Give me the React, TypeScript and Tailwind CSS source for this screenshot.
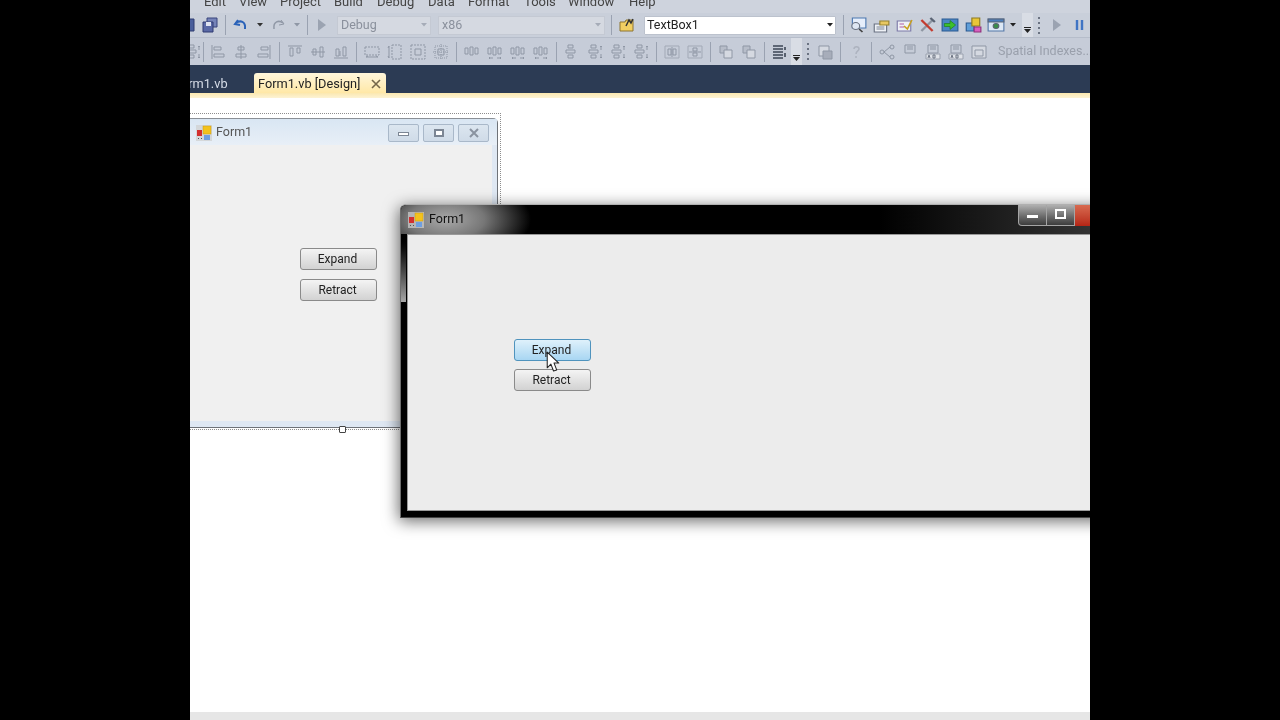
import React from "react";

const F = "font-['Roboto','Liberation_Sans',sans-serif]";

function Ico({ children, w = 16, d = false }: { children: React.ReactNode; w?: number; d?: boolean }) {
  return (
    <svg width={w} height={16} viewBox="0 0 16 16" fill="none" stroke={d ? "#8f97a5" : "#5b6474"} strokeWidth="1" className="shrink-0" preserveAspectRatio="none">
      {children}
    </svg>
  );
}
const Sep = () => <div className="w-px h-[20px] ml-[7px] mr-[7px] bg-[#9aa2b1] shrink-0" />;
const Caret = ({ c = "#333" }: { c?: string }) => (
  <svg width="6" height="4" viewBox="0 0 6 4" className="shrink-0"><path d="M0 0H6L3 3.5Z" fill={c} /></svg>
);
const Grip = () => (
  <div className="flex flex-col gap-[3px] shrink-0 ml-[5px]">
    <div className="w-[2px] h-[2px] bg-[#6b7382]" /><div className="w-[2px] h-[2px] bg-[#6b7382]" />
    <div className="w-[2px] h-[2px] bg-[#6b7382]" /><div className="w-[2px] h-[2px] bg-[#6b7382]" />
  </div>
);
const Overflow = ({ cls }: { cls: string }) => (
  <div className={`w-[11px] self-stretch bg-[#d9dde5] flex flex-col items-center justify-end pb-[4px] gap-[1px] shrink-0 ${cls}`}>
    <div className="w-[7px] h-px bg-[#222]" />
    <svg width="7" height="4" viewBox="0 0 7 4"><path d="M0 0H7L3.5 4Z" fill="#222" /></svg>
  </div>
);

const AlignL = () => <Ico d><path d="M2 1V15M4 3H11V6H4ZM4 10H14V13H4Z" /></Ico>;
const AlignC = () => <Ico d><path d="M8 1V15M5 3H11V6H5ZM3 10H13V13H3Z" /></Ico>;
const AlignR = () => <Ico d><path d="M14 1V15M5 3H12V6H5ZM2 10H12V13H2Z" /></Ico>;
const AlignT = () => <Ico d><path d="M1 2H15M3 4V12H6V4ZM10 4V9H13V4Z" /></Ico>;
const AlignM = () => <Ico d><path d="M1 8H15M3 5V11H6V5ZM10 3V13H13V3Z" /></Ico>;
const AlignB = () => <Ico d><path d="M1 14H15M3 5V12H6V5ZM10 3V12H13V3ZM7 7V12" /></Ico>;
const SizeW = () => <Ico d><path strokeDasharray="2 1" d="M1 3H15V11H1Z" /><path d="M2 13H14M2 13L4 12M14 13L12 12" /></Ico>;
const SizeH = () => <Ico d><path strokeDasharray="2 1" d="M5 1H14V15H5Z" /><path d="M2 2V14M2 2L1 4M2 14L1 12" /></Ico>;
const SizeB = () => <Ico d><path strokeDasharray="2 1" d="M1 1H15V15H1Z" /><path d="M5 5H11V11H5Z" /></Ico>;
const Grid = () => <Ico d><path strokeDasharray="1 1" d="M2 2H14V14H2ZM8 0V16M0 8H16" /><path d="M5 5H11V11H5Z" /></Ico>;
const HS = ({ a = true }: { a?: boolean }) => (
  <Ico d><path d="M1 4H4V10H1ZM6 3H9V11H6ZM11 4H14V10H11Z" />{a && <path d="M2 14H6M2 14L3 13M2 14L3 15M10 14H14M14 14L13 13M14 14L13 15" />}</Ico>
);
const VS = ({ a = true }: { a?: boolean }) => (
  <Ico d><path d="M4 1H9V4H4ZM2 6H11V9H2ZM4 11H9V14H4Z" />{a && <path d="M14 2V6M14 2L13 3M14 2L15 3M14 10V14M14 14L13 13M14 14L15 13" />}</Ico>
);
const Center = ({ flip = false }: { flip?: boolean }) => (
  <Ico d><path d="M1 2H15V14H1Z" stroke="#a2a9b6" />{flip ? <path d="M2 8H14M6 4H10V7H6ZM6 9H10V12H6Z" /> : <path d="M8 3V13M4 5H7V11H4ZM9 5H12V11H9Z" />}</Ico>
);
const Layer = () => <Ico d><path d="M2 2H9V9H2Z" fill="#b7bdc9" /><path d="M6 6H14V14H6Z" fill="#d5d9e1" /></Ico>;
const Lines = () => (
  <Ico><path d="M1 2H11M1 5H11M1 8H11M1 11H11M1 14H11" stroke="#3d4656" strokeWidth="1.4" /><path d="M13 3V6M13 9V13" stroke="#3d4656" strokeWidth="1.6" /></Ico>
);
const Doc = ({ t = false }: { t?: boolean }) => (
  <Ico d><path d="M3 1H13V9H3Z" /><path d="M5 3H11M5 5H11" />{t && <path d="M1 10H15V15H1Z" fill="#dfe2e8" stroke="#9aa1ae" />}{t && <path d="M3 14L4 11L5 14M8 11V14M8 11H10V14H8" stroke="#6d7483" />}</Ico>
);
const Play = ({ c = "#9ba3b1" }: { c?: string }) => (
  <svg width="16" height="16" viewBox="0 0 16 16" className="shrink-0"><path d="M4 2L12 8L4 14Z" fill={c} /></svg>
);

function FormIcon() {
  return (
    <svg width="16" height="16" viewBox="0 0 16 16" className="shrink-0">
      <rect width="16" height="16" fill="#cfcfcf" opacity=".7" />
      <rect x="7" y="1" width="8" height="8" fill="#f3c21c" stroke="#c99a10" strokeWidth=".5" />
      <rect x="1" y="5" width="5" height="6" fill="#d33030" />
      <rect x="8" y="10" width="6" height="5" fill="#6f9fe0" />
      <rect x="2" y="13" width="1" height="1" fill="#555" /><rect x="5" y="13" width="1" height="1" fill="#555" />
    </svg>
  );
}

function WinBtn({ children, cls }: { children: React.ReactNode; cls: string }) {
  return (
    <button className={`h-[18px] rounded-[2px] border border-[#a9b8c9] bg-linear-to-b from-[#dce6f0] to-[#cfdbe8] flex items-center justify-center ${cls}`}>
      {children}
    </button>
  );
}

function FormBtn({ label, blue = false, cls = "" }: { label: string; blue?: boolean; cls?: string }) {
  return (
    <button
      className={`w-[77px] h-[22px] rounded-[3px] border flex items-center justify-center text-[12px] text-[#222] pr-[2px] ${F} ${cls} ${
        blue
          ? "border-[#4f93bd] bg-linear-to-b from-[#dff1fb] to-[#a8d6f2]"
          : "border-[#8a8a8a] bg-linear-to-b from-[#f4f4f4] to-[#d2d2d2]"
      }`}
    >
      {label}
    </button>
  );
}

const menu: [string, string][] = [
  ["Edit", "w-[35px]"], ["View", "w-[41px]"], ["Project", "w-[54px]"], ["Build", "w-[43px]"], ["Debug", "w-[51px]"],
  ["Data", "w-[40px]"], ["Format", "w-[56px]"], ["Tools", "w-[44px]"], ["Window", "w-[61px]"], ["Help", "w-[40px]"],
];

export default function App() {
  return (
    <div className="w-[1280px] h-[720px] bg-black flex justify-center overflow-hidden">
      <div className={`w-[900px] h-[720px] flex flex-col bg-white overflow-hidden blur-[0.5px] ${F}`}>
        {/* menu */}
        <div className="h-[13px] bg-[#ced3dd] flex items-end pl-[14px] overflow-hidden shrink-0 text-[13px] text-[#444] leading-[16px]">
          {menu.map(([m, w]) => (
            <div key={m} className={`${w} shrink-0 h-[16px] relative top-[-3px]`}>{m}</div>
          ))}
        </div>

        {/* toolbar 1 */}
        <div className="h-[25px] bg-[#c9cfda] border-b border-[#b6bdca] flex items-center shrink-0 overflow-hidden">
          <div className="ml-[-10px]"><Ico><path d="M2 2H14V14H2Z" fill="#4a5f9c" stroke="#2e3d70" /></Ico></div>
          <div className="ml-[6px]"><Ico><path d="M5 1H15V10H5Z" fill="#7583b8" stroke="#39457c" /><path d="M1 5H11V15H1Z" fill="#5a69a6" stroke="#2e3a70" /><path d="M4 5H9V9H4Z" fill="#dfe3f0" stroke="none" /></Ico></div>
          <Sep />
          <Ico><path d="M5 3L2 7L7 8" stroke="#2a62b8" strokeWidth="2" /><path d="M3 6C7 3 13 4 12 12" stroke="#2a62b8" strokeWidth="2" /></Ico>
          <div className="ml-[8px]"><Caret /></div>
          <div className="ml-[7px]"><Ico d><path d="M11 3L14 7L9 8" /><path d="M13 6C9 3 3 4 4 12" strokeWidth="1.5" /></Ico></div>
          <div className="ml-[8px]"><Caret c="#8f97a5" /></div>
          <div className="w-px h-[20px] bg-[#9aa2b1] ml-[7px] mr-[6px] shrink-0" />
          <Play />
          <div className="ml-[7px] w-[94px] h-[19px] bg-[#d5d9e1] border border-[#c4c9d3] flex items-center justify-between px-[3px] text-[12.5px] text-[#8a909c] shrink-0">
            Debug <Caret c="#a6acb8" />
          </div>
          <div className="ml-[7px] w-[167px] h-[19px] bg-[#d5d9e1] border border-[#c4c9d3] flex items-center justify-between px-[3px] text-[12.5px] text-[#8a909c] shrink-0">
            x86 <Caret c="#a6acb8" />
          </div>
          <div className="w-px h-[20px] bg-[#9aa2b1] ml-[6px] mr-[7px] shrink-0" />
          <Ico><path d="M1 5H6L7 3H14V14H1Z" fill="#f2cf62" stroke="#8d7430" /><path d="M7 9L10 3L12 6L14 2" stroke="#333" strokeWidth="1.5" /></Ico>
          <div className="ml-[9px] w-[192px] h-[19px] bg-white border border-[#bcc2cd] rounded-[1px] flex items-center justify-between pl-[2px] pr-[2px] text-[12.5px] text-[#222] shrink-0">
            TextBox1 <Caret c="#222" />
          </div>
          <div className="w-px h-[20px] bg-[#9aa2b1] ml-[7px] mr-[5px] shrink-0" />
          <div className="flex gap-[5px] shrink-0">
            <Ico w={18}><path d="M3 1H15V11H3Z" fill="#e6eefb" stroke="#4c78b0" /><circle cx="6" cy="9" r="3.5" fill="#dfe7f3" stroke="#6a7282" /><path d="M9 12L12 15" stroke="#444" strokeWidth="1.5" /></Ico>
            <Ico w={18}><path d="M2 7H13V15H2Z" fill="#eef1f6" stroke="#6a7282" /><path d="M7 4H15V8H7Z" fill="#e8c862" stroke="#96812f" /><path d="M4 10H11M4 12H11" stroke="#7a8494" /></Ico>
            <Ico w={18}><path d="M2 4H14V14H2Z" fill="#eef1f6" stroke="#7d7aa8" /><path d="M4 7H8M4 10H8" stroke="#b15fa8" /><path d="M8 9L11 12L15 3" stroke="#c8a020" strokeWidth="1.5" /></Ico>
            <Ico w={18}><path d="M3 14L13 3" stroke="#8e96a2" strokeWidth="2" /><path d="M3 3L13 14" stroke="#c33c30" strokeWidth="2" /><path d="M11 1L15 5" stroke="#5b6474" strokeWidth="2" /></Ico>
            <Ico w={18}><path d="M1 2H15V14H1Z" fill="#4b86c4" stroke="#2b5a92" /><path d="M3 6.5H8V3.5L13 8L8 12.5V9.5H3Z" fill="#3cc02a" stroke="#1d7a14" strokeWidth=".6" /></Ico>
            <Ico w={18}><path d="M2 6H9V14H2Z" fill="#5f9ed8" stroke="#2b5a92" /><path d="M7 1H14V9H7Z" fill="#e9c638" stroke="#8d7a20" /><path d="M9 10H15V15H9Z" fill="#d85fc0" stroke="#90307a" /></Ico>
            <Ico w={18}><path d="M1 2H15V14H1Z" fill="#dde8f5" stroke="#5479a8" /><path d="M1 2H15V5H1Z" fill="#4a7fbf" /><circle cx="8" cy="9" r="2.5" fill="#3a8f4a" /></Ico>
          </div>
          <div className="ml-[5px]"><Caret c="#222" /></div>
          <Overflow cls="ml-[6px]" />
          <Grip />
          <div className="ml-[9px]"><Play /></div>
          <div className="ml-[7px]">
            <Ico><path d="M5 3V13M10 3V13" stroke="#3f74c4" strokeWidth="2.4" /></Ico>
          </div>
        </div>

        {/* toolbar 2 */}
        <div className="h-[27px] bg-[#c6ccd8] flex items-center shrink-0 overflow-hidden">
          <div className="ml-[-5px]"><VS /></div>
          <div className="w-px h-[20px] bg-[#9aa2b1] ml-[2px] mr-[6px] shrink-0" />
          <div className="flex gap-[7px]"><AlignL /><AlignC /><AlignR /></div>
          <Sep />
          <div className="flex gap-[7px]"><AlignT /><AlignM /><AlignB /></div>
          <Sep />
          <div className="flex gap-[7px]"><SizeW /><SizeH /><SizeB /><Grid /></div>
          <Sep />
          <div className="flex gap-[7px]"><HS a={false} /><HS /><HS /><HS /></div>
          <Sep />
          <div className="flex gap-[7px]"><VS a={false} /><VS /><VS /><VS /></div>
          <Sep />
          <div className="flex gap-[7px]"><Center /><Center flip /></div>
          <Sep />
          <div className="flex gap-[7px]"><Layer /><Layer /></div>
          <Sep />
          <Lines />
          <Overflow cls="ml-[3px]" />
          <Grip />
          <div className="ml-[8px]"><Ico d><path d="M2 2H12V12H2Z" fill="#d5d9e1" /><path d="M6 7H15V15H6Z" fill="#a7adba" /></Ico></div>
          <Sep />
          <Ico d><path d="M6 5C6 2 11 2 11 5C11 7 8 7 8 10M8 12V14" stroke="#adb3bf" strokeWidth="1.5" /></Ico>
          <Sep />
          <div className="flex gap-[7px] shrink-0">
            <Ico d><circle cx="3" cy="8" r="2" /><circle cx="13" cy="3" r="2" /><circle cx="13" cy="13" r="2" /><path d="M5 8L11 3M5 8L11 13" /></Ico>
            <Doc />
            <Doc t />
            <Doc t />
            <Ico d><path d="M1 2H15V14H1Z" fill="#d5d9e1" /><path d="M4 6H12V12H4Z" /></Ico>
          </div>
          <div className="ml-[11px] text-[12.5px] text-[#9aa0ac] whitespace-nowrap">Spatial Indexes...</div>
        </div>

        {/* tabs */}
        <div className="h-[28px] bg-[#2c3b54] flex items-end shrink-0 overflow-hidden text-[12.75px]">
          <div className="ml-[-16px] w-[80px] h-[20px] text-[#d7dde8] shrink-0 leading-[22px]">Form1.vb</div>
          <div className="w-[132px] h-[20px] rounded-t-[3px] bg-linear-to-b from-[#fff6db] to-[#ffe8a6] flex items-center pl-[4px] pt-[1px] text-[#222] shrink-0">
            <span className="whitespace-nowrap">Form1.vb [Design]</span>
            <svg width="10" height="10" viewBox="0 0 10 10" className="ml-auto mr-[5px]"><path d="M1 1L9 9M9 1L1 9" stroke="#75674a" strokeWidth="1.6" /></svg>
          </div>
        </div>
        <div className="h-[5px] bg-linear-to-b from-[#fbe8b0] to-[#fdf3d4] shrink-0" />

        {/* canvas */}
        <div className="relative flex-1 bg-white overflow-hidden">
          {/* designer form */}
          <div className="absolute left-[-20px] top-[15px] w-[331px] h-[317px] border border-dotted border-[#8d8d8d] pt-[4px] pr-[2px]">
            <div className="h-[310px] rounded-t-[5px] border border-[#6e7278] border-t-[#8a8f96] bg-[#dfe8f3] flex flex-col pr-[5px] pb-[6px]">
              <div className="h-[26px] flex items-center pl-[24px] pt-[1px] shrink-0 bg-linear-to-b from-[#d9e6f3] to-[#e8eff7] -mr-[5px] pr-[8px]">
                <FormIcon />
                <span className="ml-[4px] text-[12.5px] text-[#555]">Form1</span>
                <div className="ml-auto flex gap-[4px]">
                  <WinBtn cls="w-[31px]"><div className="w-[11px] h-[4px] border border-[#7c8694] bg-white mt-[3px]" /></WinBtn>
                  <WinBtn cls="w-[31px]"><div className="w-[10px] h-[8px] border-2 border-[#7c8694] bg-white" /></WinBtn>
                  <WinBtn cls="w-[31px]">
                    <svg width="12" height="10" viewBox="0 0 12 10"><path d="M2 1L10 9M10 1L2 9" stroke="#8a93a0" strokeWidth="2" /></svg>
                  </WinBtn>
                </div>
              </div>
              <div className="flex-1 bg-[#f0f0f0] relative">
                <FormBtn label="Expand" cls="absolute left-[128px] top-[103px]" />
                <FormBtn label="Retract" cls="absolute left-[128px] top-[134px]" />
              </div>
            </div>
            <div className="absolute left-[168px] top-[312px] w-[7px] h-[7px] bg-white border border-[#444] rounded-[1px]" />
          </div>

          {/* running form */}
          <div className="absolute left-[210px] top-[106px] w-[720px] h-[314px] rounded-t-[6px] bg-black border border-[#6e6e6e] border-b-[#444] border-t-[#b0b0b0] shadow-[-1px_3px_16px_rgba(0,0,0,0.6)] flex flex-col">
            <div className="h-[29px] shrink-0 rounded-t-[5px] flex items-center pl-[7px] bg-[radial-gradient(ellipse_85px_42px_at_45px_50%,#a9a9a9_0%,#777_45%,#000_100%)] relative">
              <FormIcon />
              <span className="ml-[5px] text-[12.5px] text-[#111]">Form1</span>
              <div className="absolute inset-y-0 right-0 w-[240px] bg-linear-to-r from-transparent to-[#3a3a3a]" />
              <div className="ml-auto flex h-[21px] self-start relative">
                <div className="w-[29px] rounded-bl-[4px] border border-t-0 border-[#a5a5a5] bg-linear-to-b from-[#b0b0b0] to-[#3d3d3d] flex items-center justify-center">
                  <div className="w-[11px] h-[3px] bg-white mt-[3px]" />
                </div>
                <div className="w-[28px] border border-t-0 border-l-0 border-[#a5a5a5] bg-linear-to-b from-[#b0b0b0] to-[#3d3d3d] flex items-center justify-center">
                  <div className="w-[11px] h-[10px] border-2 border-white -mt-[3px]" />
                </div>
                <div className="w-[44px] bg-linear-to-b from-[#d86a50] to-[#b52415]" />
              </div>
            </div>
            <div className="flex-1 flex px-[6px] pb-[6px] relative">
              <div className="absolute left-0 top-0 w-[5px] h-[68px] bg-linear-to-b from-black to-[#a8a8a8]" />
              <div className="flex-1 bg-[#ececec] border border-[#999] relative">
                <FormBtn label="Expand" blue cls="absolute left-[106px] top-[104px]" />
                <FormBtn label="Retract" cls="absolute left-[106px] top-[134px]" />
                <svg width="14" height="21" viewBox="0 0 13 20" className="absolute left-[138px] top-[116px]">
                  <path d="M1 1V16L4.5 12.5L7 19L10 18L7.5 11.5H12Z" fill="#fff" stroke="#222" strokeWidth="1" strokeLinejoin="round" />
                </svg>
              </div>
            </div>
          </div>

          {/* bottom scrollbar strip */}
          <div className="absolute bottom-0 inset-x-0 h-[8px] bg-[#e6e6e6]" />
        </div>
      </div>
    </div>
  );
}
